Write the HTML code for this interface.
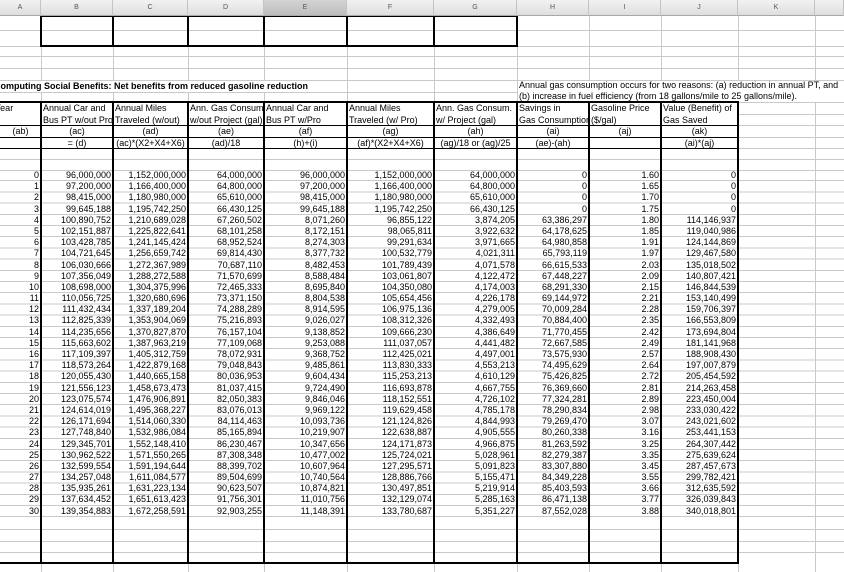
<!DOCTYPE html>
<html><head><meta charset="utf-8">
<style>
*{margin:0;padding:0;box-sizing:border-box}
body{width:844px;height:572px;overflow:hidden;background:#fff;font-family:"Liberation Sans",Arial,sans-serif;font-size:9px;color:#000;position:relative}
.h{position:absolute;left:0;width:844px;height:1px;background:#c9c9c9}
.v{position:absolute;top:16px;width:1px;height:556px;background:#c9c9c9}
.tb{position:absolute;background:#000}
.ch{position:absolute;top:0;height:16px;background:linear-gradient(#f2f2f2,#dedede);border-right:1px solid #c4c4c4;border-bottom:1px solid #a8a8a8;font-size:7px;color:#555;text-align:center;line-height:16px}
.w{position:absolute;background:#fff}
.row{position:absolute;left:0;display:grid;grid-template-columns:41px 72px 75px 76px 83px 87px 83px 72px 72px 77px;white-space:nowrap}
.row div{overflow:hidden;padding:0 2px}
.r div{text-align:right}
.c div{text-align:center}
.l div{text-align:left}
#data{position:absolute;left:0;top:170px;width:844px;height:347.2px;background:repeating-linear-gradient(to bottom,transparent 0,transparent 10.2px,#c9c9c9 10.2px,#c9c9c9 11.2px)}
#data .row{position:relative;height:11.2px;line-height:11.4px}
</style></head><body>
<!-- column headers -->
<div class="ch" style="left:0;width:41px">A</div>
<div class="ch" style="left:41px;width:72px">B</div>
<div class="ch" style="left:113px;width:75px">C</div>
<div class="ch" style="left:188px;width:76px">D</div>
<div class="ch" style="left:264px;width:83px;background:linear-gradient(#d4d4d4,#bdbdbd)">E</div>
<div class="ch" style="left:347px;width:87px">F</div>
<div class="ch" style="left:434px;width:83px">G</div>
<div class="ch" style="left:517px;width:72px">H</div>
<div class="ch" style="left:589px;width:72px">I</div>
<div class="ch" style="left:661px;width:77px">J</div>
<div class="ch" style="left:738px;width:77px">K</div>
<div class="ch" style="left:815px;width:29px"></div>

<!-- grey verticals -->
<div class="v" style="left:41px"></div><div class="v" style="left:113px"></div><div class="v" style="left:188px"></div><div class="v" style="left:264px"></div><div class="v" style="left:347px"></div><div class="v" style="left:434px"></div><div class="v" style="left:517px"></div><div class="v" style="left:589px"></div><div class="v" style="left:661px"></div><div class="v" style="left:738px"></div><div class="v" style="left:815px"></div>

<!-- grey horizontals -->
<div class="h" style="top:30px"></div><div class="h" style="top:46px"></div><div class="h" style="top:56px"></div><div class="h" style="top:68px"></div><div class="h" style="top:80px"></div><div class="h" style="top:92px"></div><div class="h" style="top:102px"></div>
<div class="h" style="top:114px;left:738px;width:106px"></div>
<div class="h" style="top:125px"></div><div class="h" style="top:137px"></div><div class="h" style="top:148px"></div><div class="h" style="top:159px"></div><div class="h" style="top:170px"></div>
<div class="h" style="top:529px"></div><div class="h" style="top:541px"></div><div class="h" style="top:552px"></div>

<div id="data"></div>

<!-- white covers for overflowing text -->
<div class="w" style="left:0;top:81px;width:346px;height:11px"></div>
<div class="w" style="left:518px;top:81px;width:326px;height:21px"></div>

<!-- thick lines: top box -->
<div class="tb" style="left:40px;top:16px;width:478px;height:1px"></div>
<div class="tb" style="left:40px;top:45px;width:478px;height:2px"></div>
<div class="tb" style="left:40px;top:16px;width:2px;height:30px"></div>
<div class="tb" style="left:112px;top:16px;width:2px;height:30px"></div>
<div class="tb" style="left:187px;top:16px;width:2px;height:30px"></div>
<div class="tb" style="left:263px;top:16px;width:2px;height:30px"></div>
<div class="tb" style="left:346px;top:16px;width:2px;height:30px"></div>
<div class="tb" style="left:433px;top:16px;width:2px;height:30px"></div>
<div class="tb" style="left:516px;top:16px;width:2px;height:30px"></div>

<!-- thick lines: main table -->
<div class="tb" style="left:0;top:101px;width:739px;height:2px"></div>
<div class="tb" style="left:0;top:125px;width:739px;height:1px"></div>
<div class="tb" style="left:0;top:137px;width:739px;height:1px"></div>
<div class="tb" style="left:0;top:148px;width:739px;height:1px"></div>
<div class="tb" style="left:0;top:562px;width:739px;height:2px"></div>
<div class="tb" style="left:40px;top:102px;width:2px;height:461px"></div>
<div class="tb" style="left:112px;top:102px;width:2px;height:461px"></div>
<div class="tb" style="left:187px;top:102px;width:2px;height:461px"></div>
<div class="tb" style="left:263px;top:102px;width:2px;height:461px"></div>
<div class="tb" style="left:346px;top:102px;width:2px;height:461px"></div>
<div class="tb" style="left:433px;top:102px;width:2px;height:461px"></div>
<div class="tb" style="left:516px;top:102px;width:2px;height:461px"></div>
<div class="tb" style="left:588px;top:102px;width:2px;height:461px"></div>
<div class="tb" style="left:660px;top:102px;width:2px;height:461px"></div>
<div class="tb" style="left:737px;top:102px;width:2px;height:461px"></div>

<!-- title & note -->
<div style="position:absolute;left:-6px;top:80px;line-height:13px;font-weight:bold;white-space:nowrap">Computing Social Benefits: Net benefits from reduced gasoline reduction</div>
<div style="position:absolute;left:519px;top:80px;line-height:11px;white-space:nowrap">Annual gas consumption occurs for two reasons: (a) reduction in annual PT, and<br>(b) increase in fuel efficiency (from 18 gallons/mile to 25 gallons/mile).</div>

<!-- header rows -->
<div class="row l" style="top:102px;height:12px;line-height:13px"><div style="margin-left:-5px;padding-left:0">Year</div><div>Annual Car and</div><div>Annual Miles</div><div>Ann. Gas Consum</div><div>Annual Car and</div><div>Annual Miles</div><div>Ann. Gas Consum.</div><div>Savings in</div><div>Gasoline Price</div><div>Value (Benefit) of</div></div>
<div class="row l" style="top:114px;height:11px;line-height:12px"><div></div><div>Bus PT w/out Pro</div><div>Traveled (w/out)</div><div>w/out Project (gal)</div><div>Bus PT w/Pro</div><div>Traveled (w/ Pro)</div><div>w/ Project (gal)</div><div>Gas Consumption</div><div>($/gal)</div><div>Gas Saved</div></div>
<div class="row c" style="top:125px;height:12px;line-height:13px"><div>(ab)</div><div>(ac)</div><div>(ad)</div><div>(ae)</div><div>(af)</div><div>(ag)</div><div>(ah)</div><div>(ai)</div><div>(aj)</div><div>(ak)</div></div>
<div class="row c" style="top:137px;height:11px;line-height:12px"><div></div><div>= (d)</div><div>(ac)*(X2+X4+X6)</div><div>(ad)/18</div><div>(h)+(i)</div><div>(af)*(X2+X4+X6)</div><div>(ag)/18 or (ag)/25</div><div>(ae)-(ah)</div><div></div><div>(ai)*(aj)</div></div>

<div style="position:absolute;left:0;top:170px;width:844px">
<div id="d2" style="position:relative">
<style>#d2 .row{position:relative;height:11.2px;line-height:11.4px}</style>
<div class="row r"><div>0</div><div>96,000,000</div><div>1,152,000,000</div><div>64,000,000</div><div>96,000,000</div><div>1,152,000,000</div><div>64,000,000</div><div>0</div><div>1.60</div><div>0</div></div>
<div class="row r"><div>1</div><div>97,200,000</div><div>1,166,400,000</div><div>64,800,000</div><div>97,200,000</div><div>1,166,400,000</div><div>64,800,000</div><div>0</div><div>1.65</div><div>0</div></div>
<div class="row r"><div>2</div><div>98,415,000</div><div>1,180,980,000</div><div>65,610,000</div><div>98,415,000</div><div>1,180,980,000</div><div>65,610,000</div><div>0</div><div>1.70</div><div>0</div></div>
<div class="row r"><div>3</div><div>99,645,188</div><div>1,195,742,250</div><div>66,430,125</div><div>99,645,188</div><div>1,195,742,250</div><div>66,430,125</div><div>0</div><div>1.75</div><div>0</div></div>
<div class="row r"><div>4</div><div>100,890,752</div><div>1,210,689,028</div><div>67,260,502</div><div>8,071,260</div><div>96,855,122</div><div>3,874,205</div><div>63,386,297</div><div>1.80</div><div>114,146,937</div></div>
<div class="row r"><div>5</div><div>102,151,887</div><div>1,225,822,641</div><div>68,101,258</div><div>8,172,151</div><div>98,065,811</div><div>3,922,632</div><div>64,178,625</div><div>1.85</div><div>119,040,986</div></div>
<div class="row r"><div>6</div><div>103,428,785</div><div>1,241,145,424</div><div>68,952,524</div><div>8,274,303</div><div>99,291,634</div><div>3,971,665</div><div>64,980,858</div><div>1.91</div><div>124,144,869</div></div>
<div class="row r"><div>7</div><div>104,721,645</div><div>1,256,659,742</div><div>69,814,430</div><div>8,377,732</div><div>100,532,779</div><div>4,021,311</div><div>65,793,119</div><div>1.97</div><div>129,467,580</div></div>
<div class="row r"><div>8</div><div>106,030,666</div><div>1,272,367,989</div><div>70,687,110</div><div>8,482,453</div><div>101,789,439</div><div>4,071,578</div><div>66,615,533</div><div>2.03</div><div>135,018,502</div></div>
<div class="row r"><div>9</div><div>107,356,049</div><div>1,288,272,588</div><div>71,570,699</div><div>8,588,484</div><div>103,061,807</div><div>4,122,472</div><div>67,448,227</div><div>2.09</div><div>140,807,421</div></div>
<div class="row r"><div>10</div><div>108,698,000</div><div>1,304,375,996</div><div>72,465,333</div><div>8,695,840</div><div>104,350,080</div><div>4,174,003</div><div>68,291,330</div><div>2.15</div><div>146,844,539</div></div>
<div class="row r"><div>11</div><div>110,056,725</div><div>1,320,680,696</div><div>73,371,150</div><div>8,804,538</div><div>105,654,456</div><div>4,226,178</div><div>69,144,972</div><div>2.21</div><div>153,140,499</div></div>
<div class="row r"><div>12</div><div>111,432,434</div><div>1,337,189,204</div><div>74,288,289</div><div>8,914,595</div><div>106,975,136</div><div>4,279,005</div><div>70,009,284</div><div>2.28</div><div>159,706,397</div></div>
<div class="row r"><div>13</div><div>112,825,339</div><div>1,353,904,069</div><div>75,216,893</div><div>9,026,027</div><div>108,312,326</div><div>4,332,493</div><div>70,884,400</div><div>2.35</div><div>166,553,809</div></div>
<div class="row r"><div>14</div><div>114,235,656</div><div>1,370,827,870</div><div>76,157,104</div><div>9,138,852</div><div>109,666,230</div><div>4,386,649</div><div>71,770,455</div><div>2.42</div><div>173,694,804</div></div>
<div class="row r"><div>15</div><div>115,663,602</div><div>1,387,963,219</div><div>77,109,068</div><div>9,253,088</div><div>111,037,057</div><div>4,441,482</div><div>72,667,585</div><div>2.49</div><div>181,141,968</div></div>
<div class="row r"><div>16</div><div>117,109,397</div><div>1,405,312,759</div><div>78,072,931</div><div>9,368,752</div><div>112,425,021</div><div>4,497,001</div><div>73,575,930</div><div>2.57</div><div>188,908,430</div></div>
<div class="row r"><div>17</div><div>118,573,264</div><div>1,422,879,168</div><div>79,048,843</div><div>9,485,861</div><div>113,830,333</div><div>4,553,213</div><div>74,495,629</div><div>2.64</div><div>197,007,879</div></div>
<div class="row r"><div>18</div><div>120,055,430</div><div>1,440,665,158</div><div>80,036,953</div><div>9,604,434</div><div>115,253,213</div><div>4,610,129</div><div>75,426,825</div><div>2.72</div><div>205,454,592</div></div>
<div class="row r"><div>19</div><div>121,556,123</div><div>1,458,673,473</div><div>81,037,415</div><div>9,724,490</div><div>116,693,878</div><div>4,667,755</div><div>76,369,660</div><div>2.81</div><div>214,263,458</div></div>
<div class="row r"><div>20</div><div>123,075,574</div><div>1,476,906,891</div><div>82,050,383</div><div>9,846,046</div><div>118,152,551</div><div>4,726,102</div><div>77,324,281</div><div>2.89</div><div>223,450,004</div></div>
<div class="row r"><div>21</div><div>124,614,019</div><div>1,495,368,227</div><div>83,076,013</div><div>9,969,122</div><div>119,629,458</div><div>4,785,178</div><div>78,290,834</div><div>2.98</div><div>233,030,422</div></div>
<div class="row r"><div>22</div><div>126,171,694</div><div>1,514,060,330</div><div>84,114,463</div><div>10,093,736</div><div>121,124,826</div><div>4,844,993</div><div>79,269,470</div><div>3.07</div><div>243,021,602</div></div>
<div class="row r"><div>23</div><div>127,748,840</div><div>1,532,986,084</div><div>85,165,894</div><div>10,219,907</div><div>122,638,887</div><div>4,905,555</div><div>80,260,338</div><div>3.16</div><div>253,441,153</div></div>
<div class="row r"><div>24</div><div>129,345,701</div><div>1,552,148,410</div><div>86,230,467</div><div>10,347,656</div><div>124,171,873</div><div>4,966,875</div><div>81,263,592</div><div>3.25</div><div>264,307,442</div></div>
<div class="row r"><div>25</div><div>130,962,522</div><div>1,571,550,265</div><div>87,308,348</div><div>10,477,002</div><div>125,724,021</div><div>5,028,961</div><div>82,279,387</div><div>3.35</div><div>275,639,624</div></div>
<div class="row r"><div>26</div><div>132,599,554</div><div>1,591,194,644</div><div>88,399,702</div><div>10,607,964</div><div>127,295,571</div><div>5,091,823</div><div>83,307,880</div><div>3.45</div><div>287,457,673</div></div>
<div class="row r"><div>27</div><div>134,257,048</div><div>1,611,084,577</div><div>89,504,699</div><div>10,740,564</div><div>128,886,766</div><div>5,155,471</div><div>84,349,228</div><div>3.55</div><div>299,782,421</div></div>
<div class="row r"><div>28</div><div>135,935,261</div><div>1,631,223,134</div><div>90,623,507</div><div>10,874,821</div><div>130,497,851</div><div>5,219,914</div><div>85,403,593</div><div>3.66</div><div>312,635,592</div></div>
<div class="row r"><div>29</div><div>137,634,452</div><div>1,651,613,423</div><div>91,756,301</div><div>11,010,756</div><div>132,129,074</div><div>5,285,163</div><div>86,471,138</div><div>3.77</div><div>326,039,843</div></div>
<div class="row r"><div>30</div><div>139,354,883</div><div>1,672,258,591</div><div>92,903,255</div><div>11,148,391</div><div>133,780,687</div><div>5,351,227</div><div>87,552,028</div><div>3.88</div><div>340,018,801</div></div>
</div></div>
</body></html>
